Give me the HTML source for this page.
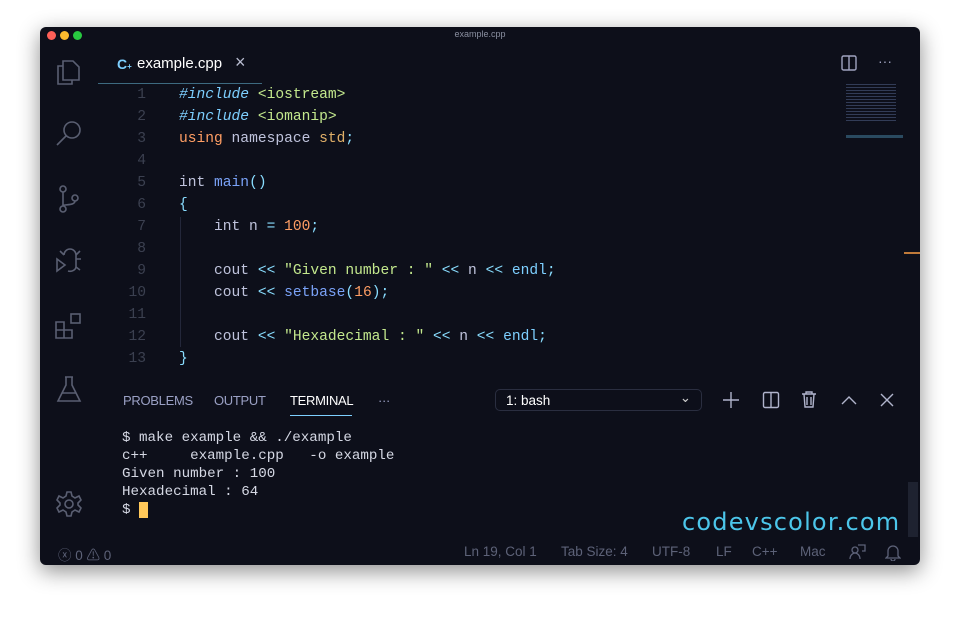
<!DOCTYPE html>
<html><head><meta charset="utf-8"><style>
*{margin:0;padding:0;box-sizing:border-box}
body{width:960px;height:618px;background:#fff;position:relative;overflow:hidden;font-family:"Liberation Sans",sans-serif}
.win{position:absolute;left:40px;top:27px;width:880px;height:538px;background:#0d0f1a;border-radius:6px;box-shadow:0 6px 22px rgba(0,0,0,.45);overflow:hidden}
.abs{position:absolute}
.dot{position:absolute;top:4px;width:9px;height:9px;border-radius:50%}
.title{position:absolute;top:2px;left:0;width:880px;text-align:center;color:#8a8fa0;font-size:9px}
.code{position:absolute;left:0;top:57px;font-family:"Liberation Mono",monospace;font-size:14.6px;line-height:22px}
.ln{position:absolute;left:60px;width:46px;text-align:right;color:#3b4050}
.tx{position:absolute;left:139px;top:0;color:#bfc3dc;white-space:pre}
.inc{color:#7dcfff;font-style:italic}.str{color:#c3e88d}.kw{color:#ff9e64}.ty{color:#e0af68}.fn{color:#7aa2f7}.num{color:#ff9e64}.op{color:#89ddff}
.tabs{position:absolute;top:366px;font-size:13px;color:#9aa0c4;letter-spacing:-0.3px}
.term{position:absolute;left:82px;top:402px;font-family:"Liberation Mono",monospace;font-size:14.2px;line-height:18px;color:#d5d8e4;white-space:pre}
.status{position:absolute;top:517px;font-size:13.5px;color:#5d6278}
svg{position:absolute}
</style></head><body>
<div class="win">
<div class="dot" style="left:7px;background:#fe5f57"></div>
<div class="dot" style="left:20px;background:#febc2e"></div>
<div class="dot" style="left:33px;background:#28c840"></div>
<div class="title">example.cpp</div>

<svg style="left:14px;top:30px" width="30" height="30" viewBox="0 0 30 30" fill="none" stroke="#5a5f72" stroke-width="1.6"><path d="M9 4h10l6 6v13H9z"/><path d="M9 9H4v18h14v-4"/></svg>
<svg style="left:14px;top:92px" width="30" height="30" viewBox="0 0 30 30" fill="none" stroke="#5a5f72" stroke-width="1.6"><circle cx="18" cy="11" r="8"/><path d="M12 17L3 26"/></svg>
<svg style="left:14px;top:157px" width="30" height="30" viewBox="0 0 30 30" fill="none" stroke="#5a5f72" stroke-width="1.6"><circle cx="9" cy="5" r="3"/><circle cx="9" cy="25" r="3"/><circle cx="21" cy="14" r="3"/><path d="M9 8v14M21 17c0 5-12 3-12 5"/></svg>
<svg style="left:14px;top:220px" width="30" height="30" viewBox="0 0 30 30" fill="none" stroke="#5a5f72" stroke-width="1.6"><path d="M10 8a6 6 0 0 1 12 0v12a6 5 0 0 1-8 4"/><path d="M3 12l8 6-8 6z"/><path d="M22 12h5M22 20l4 3M22 8l4-4M10 8l-4-4"/></svg>
<svg style="left:14px;top:285px" width="30" height="30" viewBox="0 0 30 30" fill="none" stroke="#5a5f72" stroke-width="1.6"><path d="M2 10h8v8H2zM10 18h8v8h-8zM2 18h8v8H2z"/><rect x="17" y="2" width="9" height="9"/></svg>
<svg style="left:14px;top:347px" width="30" height="30" viewBox="0 0 30 30" fill="none" stroke="#5a5f72" stroke-width="1.6"><path d="M11 3h8M12 3v8L4 27h22L18 11V3M8 19h14"/></svg>
<svg style="left:14px;top:462px" width="30" height="30" viewBox="0 0 30 30" fill="none" stroke="#5a5f72" stroke-width="1.6"><circle cx="15" cy="15" r="4"/><path d="M13 3h4l1 4 3 2 4-2 2 4-3 3v2l3 3-2 4-4-2-3 2-1 4h-4l-1-4-3-2-4 2-2-4 3-3v-2l-3-3 2-4 4 2 3-2z"/></svg>

<div class="abs" style="left:77px;top:29px;color:#7dcfff;font-size:14px;font-weight:bold">C<span style="font-size:8px">+</span></div>
<div class="abs" style="left:97px;top:28px;color:#fff;font-size:15px">example.cpp</div>
<div class="abs" style="left:195px;top:25px;color:#b8bcd0;font-size:18px">×</div>
<div class="abs" style="left:58px;top:56px;width:164px;height:1px;background:#3d6a80"></div>
<svg style="left:800px;top:27px" width="18" height="18" viewBox="0 0 18 18" fill="none" stroke="#a0a4c0" stroke-width="1.4"><rect x="2" y="2" width="14" height="14" rx="1.5"/><path d="M9 2v14"/></svg>
<div class="abs" style="left:838px;top:26px;color:#a0a4c0;font-size:14px">···</div>

<div class="code">
<div class="ln" style="top:0">1</div><div class="ln" style="top:22px">2</div><div class="ln" style="top:44px">3</div><div class="ln" style="top:66px">4</div><div class="ln" style="top:88px">5</div><div class="ln" style="top:110px">6</div><div class="ln" style="top:132px">7</div><div class="ln" style="top:154px">8</div><div class="ln" style="top:176px">9</div><div class="ln" style="top:198px">10</div><div class="ln" style="top:220px">11</div><div class="ln" style="top:242px">12</div><div class="ln" style="top:264px">13</div>
<div class="tx"><span class="inc">#include</span> <span class="str">&lt;iostream&gt;</span>
<span class="inc">#include</span> <span class="str">&lt;iomanip&gt;</span>
<span class="kw">using</span> namespace <span class="ty">std</span><span class="op">;</span>

int <span class="fn">main</span><span class="op">()</span>
<span class="op">{</span>
    int n <span class="op">=</span> <span class="num">100</span><span class="op">;</span>

    cout <span class="op">&lt;&lt;</span> <span class="str">"Given number : "</span> <span class="op">&lt;&lt;</span> n <span class="op">&lt;&lt;</span> <span class="inc" style="font-style:normal">endl</span><span class="op">;</span>
    cout <span class="op">&lt;&lt;</span> <span class="fn">setbase</span><span class="op">(</span><span class="num">16</span><span class="op">);</span>

    cout <span class="op">&lt;&lt;</span> <span class="str">"Hexadecimal : "</span> <span class="op">&lt;&lt;</span> n <span class="op">&lt;&lt;</span> <span class="inc" style="font-style:normal">endl</span><span class="op">;</span>
<span class="op">}</span></div>
</div>
<div class="abs" style="left:140px;top:190px;width:1px;height:130px;background:#23273a"></div>

<div class="abs" style="left:806px;top:56px;width:50px;height:40px;opacity:.6;background:repeating-linear-gradient(#0d0f1a 0 1px,#4a5a80 1px 2px,#0d0f1a 2px 3px)"></div>
<div class="abs" style="left:806px;top:108px;width:57px;height:3px;background:#2a4a60"></div>
<div class="abs" style="left:864px;top:225px;width:16px;height:2px;background:#c07a3a"></div>

<div class="tabs" style="left:83px">PROBLEMS</div>
<div class="tabs" style="left:174px">OUTPUT</div>
<div class="tabs" style="left:250px;color:#fff">TERMINAL</div>
<div class="abs" style="left:250px;top:388px;width:62px;height:1px;background:#7dcfff"></div>
<div class="tabs" style="left:338px">···</div>
<div class="abs" style="left:455px;top:362px;width:207px;height:22px;border:1px solid #2a2e40;border-radius:5px;color:#fff;font-size:13.5px;padding:3px 10px">1: bash<span style="position:absolute;right:10px;top:0;color:#ccc">⌄</span></div>
<svg style="left:682px;top:364px" width="18" height="18" viewBox="0 0 18 18" stroke="#b0b4cc" stroke-width="1.4" fill="none"><path d="M9 1v16M1 9h16"/></svg>
<svg style="left:722px;top:364px" width="18" height="18" viewBox="0 0 18 18" stroke="#b0b4cc" stroke-width="1.4" fill="none"><rect x="1.5" y="1.5" width="15" height="15" rx="1.5"/><path d="M9 1.5v15"/></svg>
<svg style="left:761px;top:363px" width="16" height="18" viewBox="0 0 16 18" stroke="#b0b4cc" stroke-width="1.4" fill="none"><path d="M1 4h14M5 4V2h6v2M3 4l1 13h8l1-13M6 7v8M10 7v8"/></svg>
<svg style="left:800px;top:366px" width="18" height="14" viewBox="0 0 18 14" stroke="#b0b4cc" stroke-width="1.4" fill="none"><path d="M2 11l7-7 7 7"/></svg>
<svg style="left:840px;top:366px" width="14" height="14" viewBox="0 0 14 14" stroke="#b0b4cc" stroke-width="1.4" fill="none"><path d="M1 1l12 12M13 1L1 13"/></svg>

<div class="term">$ make example &amp;&amp; ./example
c++     example.cpp   -o example
Given number : 100
Hexadecimal : 64
$ <span style="background:#ffc85a;color:#ffc85a">_</span></div>
<div class="abs" style="left:868px;top:455px;width:10px;height:55px;background:#1e2230"></div>
<div class="abs" style="left:642px;top:481px;color:#4cc6ea;font-family:'DejaVu Sans',cursive;font-size:24px;letter-spacing:1.2px">codevscolor.com</div>

<div class="status" style="left:18px">ⓧ 0 ⚠ 0</div>
<div class="status" style="left:424px">Ln 19, Col 1</div>
<div class="status" style="left:521px">Tab Size: 4</div>
<div class="status" style="left:612px">UTF-8</div>
<div class="status" style="left:676px">LF</div>
<div class="status" style="left:712px">C++</div>
<div class="status" style="left:760px">Mac</div>
<svg style="left:808px;top:516px" width="18" height="18" viewBox="0 0 18 18" stroke="#5d6278" stroke-width="1.3" fill="none"><circle cx="7" cy="7" r="3"/><path d="M2 16c0-4 3-6 5-6s5 2 5 6M10 2h7v6h-3"/></svg>
<svg style="left:845px;top:516px" width="16" height="18" viewBox="0 0 16 18" stroke="#5d6278" stroke-width="1.3" fill="none"><path d="M3 13V8a5 5 0 0 1 10 0v5l2 2H1zM6 16a2 2 0 0 0 4 0"/></svg>
</div>
</body></html>
